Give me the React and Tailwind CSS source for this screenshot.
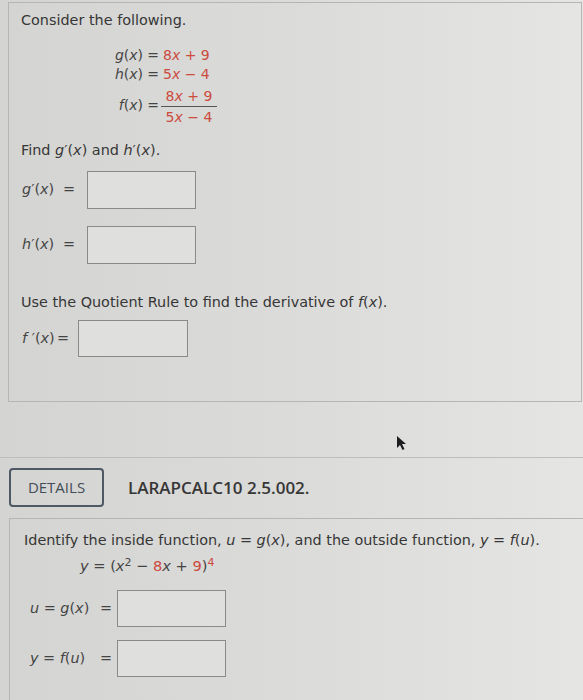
const RED = "text-[#cc4a3e]";

function I({ children }) {
  return <span className="italic">{children}</span>;
}

function Box({ w = "w-[109px]", h = "h-[38px]" }) {
  return <div className={`${w} ${h} border-[1.5px] border-[#8a8a88] bg-[#dfdfdd]`} />;
}

export default function App() {
  return (
    <div className="relative w-[583px] h-[700px] overflow-hidden bg-linear-to-r from-[#d4d4d2] via-[#dbdbd9] to-[#e5e5e3] text-[#363636] font-['DejaVu_Sans',Verdana,sans-serif] text-[14.4px]">
      {/* Panel 1 */}
      <div className="ml-[8px] mr-[1px] mt-[2px] h-[400px] border border-[#b5b5b3] pl-[12px]">
        <div className="mt-[7px] leading-[20px]">Consider the following.</div>

        <div className="mt-[16px] grid grid-cols-[122px_20px_auto] items-center leading-[19px] text-[14px] text-[#444]">
          <div className="text-right">
            <I>g</I>(<I>x</I>)
          </div>
          <div className="text-center">=</div>
          <div className={RED}>
            8<I>x</I> + 9
          </div>

          <div className="text-right">
            <I>h</I>(<I>x</I>)
          </div>
          <div className="text-center">=</div>
          <div className={RED}>
            5<I>x</I> − 4
          </div>

          <div className="text-right">
            <I>f</I>(<I>x</I>)
          </div>
          <div className="text-center">=</div>
          <div className="-ml-[2px] inline-flex w-[56px] flex-col items-center">
            <div className={`${RED} pt-[3px]`}>
              8<I>x</I> + 9
            </div>
            <div className="h-[1px] w-full bg-[#555]" />
            <div className={`${RED} pt-[1px]`}>
              5<I>x</I> − 4
            </div>
          </div>
        </div>

        <div className="mt-[13px] leading-[20px]">
          Find <I>g</I>′(<I>x</I>) and <I>h</I>′(<I>x</I>).
        </div>

        <div className="mt-[11px] flex items-center text-[#444]">
          <span className="w-[42px] pl-[1px]">
            <I>g</I>′(<I>x</I>)
          </span>
          <span className="w-[24px]">=</span>
          <Box />
        </div>

        <div className="mt-[17px] flex items-center text-[#444]">
          <span className="w-[42px] pl-[1px]">
            <I>h</I>′(<I>x</I>)
          </span>
          <span className="w-[24px]">=</span>
          <Box />
        </div>

        <div className="mt-[28px] leading-[20px]">
          Use the Quotient Rule to find the derivative of <I>f</I>(<I>x</I>).
        </div>

        <div className="mt-[8px] flex items-center text-[#444]">
          <span className="w-[36px] pl-[1px]">
            <I>f</I> ′(<I>x</I>)
          </span>
          <span className="w-[21px]">=</span>
          <Box w="w-[110px]" h="h-[37px]" />
        </div>
      </div>

      {/* mouse cursor */}
      <svg className="absolute left-[396px] top-[435px]" width="12" height="17" viewBox="0 0 12 17">
        <path d="M1 1 L1 13 L4 10 L6.5 15 L8.5 14 L6 9 L10 9 Z" fill="#1d1d1f" />
      </svg>

      {/* Divider */}
      <div className="mt-[55px] border-t border-[#bdbdbb]" />

      {/* Details row */}
      <div className="mt-[10px] flex items-center pl-[9px] font-['Open_Sans',sans-serif]">
        <div className="flex h-[39px] w-[95px] items-center justify-center rounded-[4px] border-2 border-[#4f5966] text-[15px] font-medium text-[#434d59]">
          DETAILS
        </div>
        <div className="ml-[24px] text-[17px] font-semibold text-[#363636]">LARAPCALC10 2.5.002.</div>
      </div>

      {/* Panel 2 */}
      <div className="ml-[9px] mt-[11px] h-[200px] border-l border-t border-[#b5b5b3] pl-[14px]">
        <div className="mt-[11px] leading-[20px]">
          Identify the inside function, <I>u</I> = <I>g</I>(<I>x</I>), and the outside function, <I>y</I> ={" "}
          <I>f</I>(<I>u</I>).
        </div>
        <div className="ml-[56px] mt-[6px] leading-[20px] text-[14.6px] text-[#444]">
          <I>y</I> = (<I>x</I>
          <sup className="text-[11px]">2</sup> − <span className={RED}>8</span>
          <I>x</I> + <span className={RED}>9</span>)<sup className={`${RED} text-[11px]`}>4</sup>
        </div>

        <div className="mt-[14px] flex items-center pl-[6px] text-[#444]">
          <span className="w-[70px]">
            <I>u</I> = <I>g</I>(<I>x</I>)
          </span>
          <span className="w-[17px]">=</span>
          <Box w="w-[109px]" h="h-[37px]" />
        </div>
        <div className="mt-[13px] flex items-center pl-[6px] text-[#444]">
          <span className="w-[70px]">
            <I>y</I> = <I>f</I>(<I>u</I>)
          </span>
          <span className="w-[17px]">=</span>
          <Box w="w-[109px]" h="h-[37px]" />
        </div>
      </div>
    </div>
  );
}
